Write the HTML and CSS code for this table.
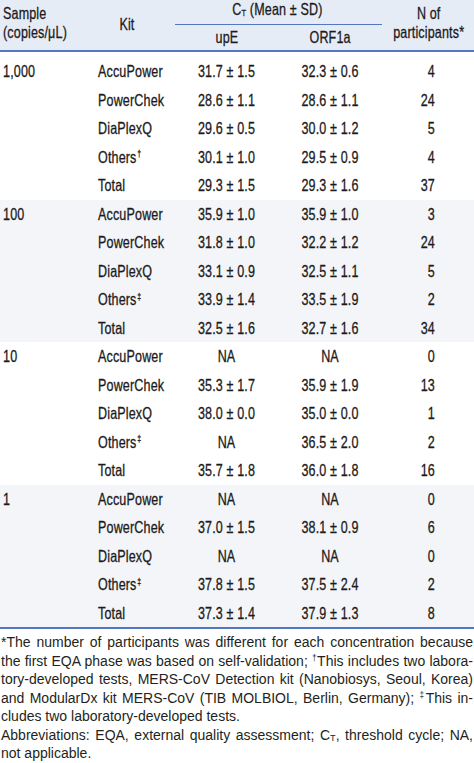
FILE: index.html
```html
<!DOCTYPE html>
<html lang="en">
<head>
<meta charset="utf-8">
<title>Table</title>
<link rel="stylesheet" href="styles.css">
</head>
<body>
<div class="table">
  <div class="thead">
    <div class="h-sample"><span class="nx nx-left">Sample<br>(copies/μL)</span></div>
    <div class="h-kit"><span class="nx">Kit</span></div>
    <div class="h-ct"><span class="nx">C<sub class="sub">T</sub> (Mean ± SD)</span></div>
    <div class="h-upe"><span class="nx">upE</span></div>
    <div class="h-orf"><span class="nx">ORF1a</span></div>
    <div class="h-n"><span class="nx">N of<br>participants*</span></div>
  </div>
  <div class="tbody">
    <div class="group">
      <div class="row"><span class="c-sample">1,000</span><span class="c-kit">AccuPower</span><span class="c-val">31.7 ± 1.5</span><span class="c-val">32.3 ± 0.6</span><span class="c-n">4</span></div>
      <div class="row"><span class="c-sample"></span><span class="c-kit">PowerChek</span><span class="c-val">28.6 ± 1.1</span><span class="c-val">28.6 ± 1.1</span><span class="c-n">24</span></div>
      <div class="row"><span class="c-sample"></span><span class="c-kit">DiaPlexQ</span><span class="c-val">29.6 ± 0.5</span><span class="c-val">30.0 ± 1.2</span><span class="c-n">5</span></div>
      <div class="row"><span class="c-sample"></span><span class="c-kit">Others<sup class="sup">†</sup></span><span class="c-val">30.1 ± 1.0</span><span class="c-val">29.5 ± 0.9</span><span class="c-n">4</span></div>
      <div class="row"><span class="c-sample"></span><span class="c-kit">Total</span><span class="c-val">29.3 ± 1.5</span><span class="c-val">29.3 ± 1.6</span><span class="c-n">37</span></div>
    </div>
    <div class="group shaded">
      <div class="row"><span class="c-sample">100</span><span class="c-kit">AccuPower</span><span class="c-val">35.9 ± 1.0</span><span class="c-val">35.9 ± 1.0</span><span class="c-n">3</span></div>
      <div class="row"><span class="c-sample"></span><span class="c-kit">PowerChek</span><span class="c-val">31.8 ± 1.0</span><span class="c-val">32.2 ± 1.2</span><span class="c-n">24</span></div>
      <div class="row"><span class="c-sample"></span><span class="c-kit">DiaPlexQ</span><span class="c-val">33.1 ± 0.9</span><span class="c-val">32.5 ± 1.1</span><span class="c-n">5</span></div>
      <div class="row"><span class="c-sample"></span><span class="c-kit">Others<sup class="sup">‡</sup></span><span class="c-val">33.9 ± 1.4</span><span class="c-val">33.5 ± 1.9</span><span class="c-n">2</span></div>
      <div class="row"><span class="c-sample"></span><span class="c-kit">Total</span><span class="c-val">32.5 ± 1.6</span><span class="c-val">32.7 ± 1.6</span><span class="c-n">34</span></div>
    </div>
    <div class="group">
      <div class="row"><span class="c-sample">10</span><span class="c-kit">AccuPower</span><span class="c-val">NA</span><span class="c-val">NA</span><span class="c-n">0</span></div>
      <div class="row"><span class="c-sample"></span><span class="c-kit">PowerChek</span><span class="c-val">35.3 ± 1.7</span><span class="c-val">35.9 ± 1.9</span><span class="c-n">13</span></div>
      <div class="row"><span class="c-sample"></span><span class="c-kit">DiaPlexQ</span><span class="c-val">38.0 ± 0.0</span><span class="c-val">35.0 ± 0.0</span><span class="c-n">1</span></div>
      <div class="row"><span class="c-sample"></span><span class="c-kit">Others<sup class="sup">‡</sup></span><span class="c-val">NA</span><span class="c-val">36.5 ± 2.0</span><span class="c-n">2</span></div>
      <div class="row"><span class="c-sample"></span><span class="c-kit">Total</span><span class="c-val">35.7 ± 1.8</span><span class="c-val">36.0 ± 1.8</span><span class="c-n">16</span></div>
    </div>
    <div class="group shaded">
      <div class="row"><span class="c-sample">1</span><span class="c-kit">AccuPower</span><span class="c-val">NA</span><span class="c-val">NA</span><span class="c-n">0</span></div>
      <div class="row"><span class="c-sample"></span><span class="c-kit">PowerChek</span><span class="c-val">37.0 ± 1.5</span><span class="c-val">38.1 ± 0.9</span><span class="c-n">6</span></div>
      <div class="row"><span class="c-sample"></span><span class="c-kit">DiaPlexQ</span><span class="c-val">NA</span><span class="c-val">NA</span><span class="c-n">0</span></div>
      <div class="row"><span class="c-sample"></span><span class="c-kit">Others<sup class="sup">‡</sup></span><span class="c-val">37.8 ± 1.5</span><span class="c-val">37.5 ± 2.4</span><span class="c-n">2</span></div>
      <div class="row"><span class="c-sample"></span><span class="c-kit">Total</span><span class="c-val">37.3 ± 1.4</span><span class="c-val">37.9 ± 1.3</span><span class="c-n">8</span></div>
    </div>
  </div>
</div>
<div class="notes">
  <span class="line">*The number of participants was different for each concentration because</span>
  <span class="line">the first EQA phase was based on self-validation; <sup class="nsup">†</sup>This includes two labora-</span>
  <span class="line">tory-developed tests, MERS-CoV Detection kit (Nanobiosys, Seoul, Korea)</span>
  <span class="line">and ModularDx kit MERS-CoV (TIB MOLBIOL, Berlin, Germany); <sup class="nsup">‡</sup>This in-</span>
  <span class="line last">cludes two laboratory-developed tests.</span>
  <span class="line">Abbreviations: EQA, external quality assessment; C<sub class="nsub">T</sub>, threshold cycle; NA,</span>
  <span class="line last">not applicable.</span>
</div>
</body>
</html>
```
FILE: styles.css
```css
* { box-sizing: border-box; }
html, body { margin: 0; padding: 0; background: #ffffff; }
body {
  width: 474px;
  height: 763px;
  overflow: hidden;
  color: #1c1a1b;
  font-family: "Liberation Sans", Arial, sans-serif;
}

.table {
  font-size: 16.5px;
  letter-spacing: 0.2px;
  -webkit-text-stroke: 0.3px #1c1a1b;
}

/* condensed look: the original uses a narrow face */
.nx {
  display: inline-block;
  transform: scaleX(0.76);
  transform-origin: 50% 50%;
  white-space: nowrap;
}
.nx-left { transform-origin: 0 50%; }

.thead {
  display: grid;
  grid-template-columns: 95px 80px 103px 104px 92px;
  grid-template-rows: 25px 27px;
  height: 52px;
  background: #e6ecf6;
  border-bottom: 2px solid #5577c3;
  line-height: 19px;
}
.h-sample { grid-column: 1; grid-row: 1 / 3; padding: 4px 0 0 3px; }
.h-kit { grid-column: 2; grid-row: 1 / 3; padding: 15px 16px 0 0; text-align: center; }
.h-ct {
  grid-column: 3 / 5; grid-row: 1;
  text-align: center;
  border-bottom: 1.5px solid #5577c3;
  padding-right: 2px;
}
.h-upe { grid-column: 3; grid-row: 2; text-align: center; padding-top: 3px; }
.h-orf { grid-column: 4; grid-row: 2; text-align: center; padding-top: 3px; }
.h-n { grid-column: 5; grid-row: 1 / 3; padding: 4px 0 0 0; text-align: center; }

.sub { font-size: 0.6em; vertical-align: -0.1em; line-height: 0; }
.sup { font-size: 0.55em; vertical-align: 0.6em; line-height: 0; margin-left: 1px; }

.tbody {
  padding-top: 5px;
  border-bottom: 2px solid #5577c3;
}
.group.shaded { background: #f3f5f9; }
.row {
  display: grid;
  grid-template-columns: 95px 80px 103px 104px 92px;
  height: 28.5px;
  line-height: 28.5px;
}
.c-sample, .c-kit, .c-val, .c-n { transform: scaleX(0.76); white-space: nowrap; }
.c-sample { padding-left: 3px; transform-origin: 3px 50%; }
.c-kit { padding-left: 3px; transform-origin: 3px 50%; }
.c-val { text-align: center; transform-origin: 50% 50%; }
.c-n { text-align: right; padding-right: 39px; transform-origin: calc(100% - 39px) 50%; }

.notes {
  font-size: 14px;
  line-height: 18.5px;
  padding: 4px 1px 0 1px;
  color: #231f20;
}
.line {
  display: block;
  text-align: justify;
  text-align-last: justify;
  white-space: nowrap;
}
.line.last { text-align-last: left; }
.nsup { font-size: 0.6em; vertical-align: 0.6em; line-height: 0; }
.nsub { font-size: 0.65em; vertical-align: -0.15em; line-height: 0; }
```
